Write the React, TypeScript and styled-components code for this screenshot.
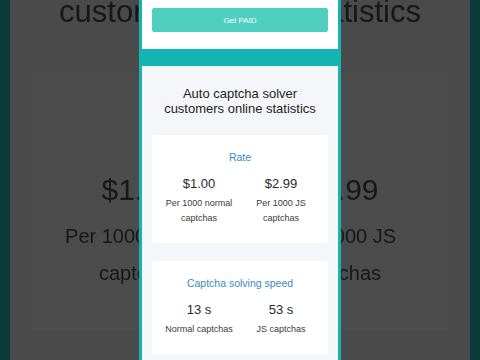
import React from "react";
import styled, { createGlobalStyle } from "styled-components";

const Global = createGlobalStyle`
  html, body { margin: 0; padding: 0; background: #0b3a3a; }
  body { font-family: "Liberation Sans", Arial, sans-serif; }
  * { box-sizing: border-box; }
`;

const Root = styled.div`
  width: 480px;
  height: 360px;
  display: flex;
  padding: 0 10px;
  background: #0b3a3a;
  overflow: hidden;
`;

const Stage = styled.div`
  flex: 1;
  display: grid;
  grid-template: 1fr / 1fr;
  background: #4a4a4a;
  overflow: hidden;
`;

/* enlarged, darkened copy of the page behind the phone */
const Backdrop = styled.div`
  grid-area: 1 / 1;
  display: flex;
  flex-direction: column;
  color: #171717;
  filter: blur(0.4px);
`;

const BgTitle = styled.div`
  margin-top: -4px;
  font-size: 31px;
  line-height: 31px;
  text-align: center;
  white-space: nowrap;
`;

const BgCard = styled.div`
  margin: 45px 22px 0;
  height: 258px;
  background: #4c4c4c;
  padding-top: 40px;
`;

const BgHeading = styled.div`
  font-size: 25px;
  line-height: 30px;
  text-align: center;
  color: #18303d;
  margin-bottom: 28px;
`;

const BgMetrics = styled.div`
  display: grid;
  grid-template-columns: 170px 170px;
  column-gap: 32px;
  padding: 0 22px;
`;

const BgMetric = styled.div`
  display: flex;
  flex-direction: column;
  align-items: center;
  text-align: center;
`;

const BgValue = styled.div`
  font-size: 30px;
  line-height: 40px;
  white-space: nowrap;
`;

const BgLabel = styled.div`
  margin-top: 8px;
  font-size: 20px;
  line-height: 37px;
`;

const Phone = styled.div`
  grid-area: 1 / 1;
  justify-self: center;
  position: relative;
  z-index: 1;
  width: 202px;
  border-left: 3px solid #17b2b2;
  border-right: 3px solid #17b2b2;
  background: #f4f6f9;
  display: flex;
  flex-direction: column;
  overflow: hidden;
`;

const TopSection = styled.div`
  background: #ffffff;
  padding: 8px 10px 17px;
`;

const PayButton = styled.button`
  display: block;
  width: 100%;
  height: 24px;
  border: none;
  border-radius: 2px;
  background: #4fcfc0;
  color: #ffffff;
  font-family: "Liberation Sans", Arial, sans-serif;
  font-size: 8px;
  padding: 0;
`;

const Band = styled.div`
  height: 17px;
  background: #14b4b4;
`;

const Stats = styled.div`
  display: flex;
  flex-direction: column;
  padding: 20px 10px 0;
`;

const Title = styled.div`
  font-size: 13px;
  line-height: 15px;
  text-align: center;
  color: #1f1f22;
  margin-bottom: 19px;
`;

const Card = styled.div`
  background: #ffffff;
  border-radius: 3px;
  padding: 15px 8px 17px;
  & + & {
    margin-top: 18px;
  }
`;

const CardHeading = styled.div`
  font-size: 10.5px;
  line-height: 14px;
  text-align: center;
  color: #3a8bbf;
  margin-bottom: 12px;
`;

const Metrics = styled.div`
  display: grid;
  grid-template-columns: 1fr 1fr;
  column-gap: 4px;
`;

const Metric = styled.div`
  display: flex;
  flex-direction: column;
  align-items: center;
  text-align: center;
`;

const Value = styled.div`
  font-size: 13px;
  line-height: 16px;
  color: #2b2b2b;
  white-space: nowrap;
`;

const Label = styled.div`
  margin-top: 4px;
  font-size: 9px;
  line-height: 15px;
  color: #3a3a3a;
`;

type MetricData = { value: string; label: string };

const rate: MetricData[] = [
  { value: "$1.00", label: "Per 1000 normal captchas" },
  { value: "$2.99", label: "Per 1000 JS captchas" },
];

const speed: MetricData[] = [
  { value: "13 s", label: "Normal captchas" },
  { value: "53 s", label: "JS captchas" },
];

export default function App() {
  return (
    <>
      <Global />
      <Root>
        <Stage>
          <Backdrop aria-hidden>
            <BgTitle>customers online statistics</BgTitle>
            <BgCard>
              <BgHeading>Rate</BgHeading>
              <BgMetrics>
                {rate.map((m) => (
                  <BgMetric key={m.value}>
                    <BgValue>{m.value}</BgValue>
                    <BgLabel>{m.label}</BgLabel>
                  </BgMetric>
                ))}
              </BgMetrics>
            </BgCard>
          </Backdrop>
          <Phone>
            <TopSection>
              <PayButton>Get PAID</PayButton>
            </TopSection>
            <Band />
            <Stats>
              <Title>
                Auto captcha solver
                <br />
                customers online statistics
              </Title>
              <Card>
                <CardHeading>Rate</CardHeading>
                <Metrics>
                  {rate.map((m) => (
                    <Metric key={m.value}>
                      <Value>{m.value}</Value>
                      <Label>{m.label}</Label>
                    </Metric>
                  ))}
                </Metrics>
              </Card>
              <Card>
                <CardHeading>Captcha solving speed</CardHeading>
                <Metrics>
                  {speed.map((m) => (
                    <Metric key={m.value}>
                      <Value>{m.value}</Value>
                      <Label>{m.label}</Label>
                    </Metric>
                  ))}
                </Metrics>
              </Card>
            </Stats>
          </Phone>
        </Stage>
      </Root>
    </>
  );
}
